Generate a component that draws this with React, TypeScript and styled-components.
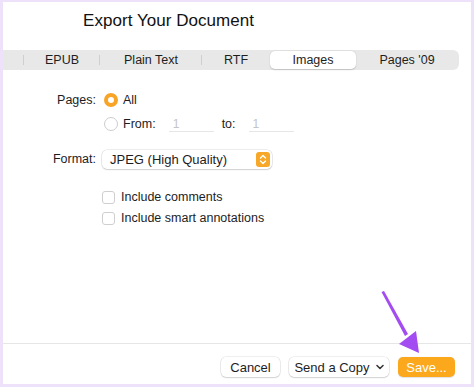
import React from "react";
import styled, { createGlobalStyle } from "styled-components";

const Global = createGlobalStyle`
  html, body { margin: 0; padding: 0; }
  body {
    background: #eee2fb;
    font-family: "Liberation Sans", Arial, sans-serif;
    color: #1d1d1f;
    -webkit-font-smoothing: antialiased;
  }
`;

const Frame = styled.div`
  width: 474px;
  height: 387px;
  box-sizing: border-box;
  padding: 2px 3px 3px 3px;
  overflow: hidden;
`;

const Panel = styled.div`
  position: relative;
  height: 100%;
  background: #ffffff;
  display: flex;
  flex-direction: column;
  overflow: hidden;
`;

const Title = styled.h1`
  margin: 0;
  padding: 9px 0 0 80px;
  height: 38px;
  box-sizing: border-box;
  font-size: 17px;
  font-weight: 400;
  color: #111;
  letter-spacing: 0.05px;
`;

const TabBar = styled.div`
  margin-top: 10px;
  width: 456px;
  height: 20px;
  display: flex;
  align-items: center;
  background: #e8e8e8;
  border-radius: 0 6px 6px 0;
`;

const Tab = styled.div<{ $active?: boolean; $w: number; $sep?: boolean }>`
  position: relative;
  width: ${(p) => p.$w}px;
  height: 18px;
  display: flex;
  align-items: center;
  justify-content: center;
  font-size: 12.5px;
  color: #1e1e1e;
  border-radius: 5px;
  background: ${(p) => (p.$active ? "#fff" : "transparent")};
  box-shadow: ${(p) => (p.$active ? "0 0.5px 1.5px rgba(0,0,0,0.18)" : "none")};
  &::after {
    content: "";
    display: ${(p) => (p.$sep ? "block" : "none")};
    position: absolute;
    right: 0;
    top: 4px;
    height: 10px;
    width: 1px;
    background: #cfcfcf;
  }
`;

const Form = styled.div`
  display: grid;
  grid-template-columns: 93px 1fr;
  column-gap: 6px;
  margin-top: 22px;
  font-size: 12.5px;
`;

const Label = styled.div<{ $top: number }>`
  text-align: right;
  margin-top: ${(p) => p.$top}px;
  line-height: 16px;
  color: #1d1d1f;
`;

const Stack = styled.div<{ $gap: number; $top?: number }>`
  display: flex;
  flex-direction: column;
  gap: ${(p) => p.$gap}px;
  margin-top: ${(p) => p.$top ?? 0}px;
`;

const Row = styled.div`
  display: flex;
  align-items: center;
  height: 16px;
  line-height: 16px;
`;

const Radio = styled.span<{ $on?: boolean }>`
  width: 14px;
  height: 14px;
  box-sizing: border-box;
  border-radius: 50%;
  margin: 0 5px 0 2px;
  flex: none;
  background: #fff;
  border: ${(p) => (p.$on ? "4px solid #f7a427" : "1px solid #cdcdcd")};
`;

const Field = styled.span`
  display: inline-block;
  width: 45px;
  height: 16px;
  margin: 0 8px 0 13px;
  padding-left: 4px;
  box-sizing: border-box;
  border-bottom: 1px solid #e6e6e6;
  color: #c4c4c4;
  font-size: 12px;
`;

const Select = styled.div`
  width: 170px;
  height: 19px;
  margin-top: -1px;
  box-sizing: border-box;
  display: flex;
  align-items: center;
  justify-content: space-between;
  padding: 0 2px 0 8px;
  border-radius: 5px;
  background: #fff;
  box-shadow: 0 0 0 0.5px rgba(0,0,0,0.14), 0 1px 1.5px rgba(0,0,0,0.12);
  font-size: 13px;
`;

const Stepper = styled.span`
  width: 14px;
  height: 15px;
  border-radius: 3px;
  background: #f8a829;
  display: flex;
  align-items: center;
  justify-content: center;
`;

const Check = styled.span`
  width: 13px;
  height: 13px;
  box-sizing: border-box;
  border-radius: 3px;
  border: 1px solid #cfcfcf;
  margin: 0 6px 0 0;
  flex: none;
`;

const Spacer = styled.div`
  flex: 1;
`;

const Footer = styled.div`
  border-top: 1px solid #e6e6e6;
  height: 41px;
  box-sizing: border-box;
  display: flex;
  justify-content: flex-end;
  align-items: flex-start;
  gap: 9px;
  padding: 13px 16px 0 0;
`;

const Button = styled.div<{ $primary?: boolean; $w: number }>`
  width: ${(p) => p.$w}px;
  height: 20px;
  box-sizing: border-box;
  display: flex;
  align-items: center;
  justify-content: center;
  gap: 6px;
  font-size: 13px;
  border-radius: 5px;
  color: ${(p) => (p.$primary ? "#fff" : "#1d1d1f")};
  background: ${(p) => (p.$primary ? "#fca81d" : "#fff")};
  box-shadow: ${(p) =>
    p.$primary
      ? "0 0.5px 1px rgba(0,0,0,0.12)"
      : "0 0 0 0.5px rgba(0,0,0,0.13), 0 1px 1.5px rgba(0,0,0,0.12)"};
`;

const Arrow = styled.svg`
  position: absolute;
  left: 0;
  top: 0;
  pointer-events: none;
`;

export default function App() {
  return (
    <>
      <Global />
      <Frame>
        <Panel>
          <Title>Export Your Document</Title>
          <TabBar>
            <Tab $w={21} $sep />
            <Tab $w={76} $sep>EPUB</Tab>
            <Tab $w={102} $sep>Plain Text</Tab>
            <Tab $w={68}>RTF</Tab>
            <Tab $w={86} $active>Images</Tab>
            <Tab $w={102}>Pages '09</Tab>
          </TabBar>
          <Form>
            <Label $top={0}>Pages:</Label>
            <Stack $gap={8}>
              <Row>
                <Radio $on />
                All
              </Row>
              <Row>
                <Radio />
                From:
                <Field>1</Field>
                to:
                <Field>1</Field>
              </Row>
            </Stack>
            <Label $top={19}>Format:</Label>
            <Stack $gap={0} $top={19}>
              <Select>
                JPEG (High Quality)
                <Stepper>
                  <svg width="8" height="11" viewBox="0 0 8 11">
                    <path d="M1.5 4 L4 1.5 L6.5 4 M1.5 7 L4 9.5 L6.5 7" fill="none" stroke="#fff" strokeWidth="1.4" strokeLinecap="round" strokeLinejoin="round" />
                  </svg>
                </Stepper>
              </Select>
            </Stack>
            <div />
            <Stack $gap={5} $top={20}>
              <Row>
                <Check />
                Include comments
              </Row>
              <Row>
                <Check />
                Include smart annotations
              </Row>
            </Stack>
          </Form>
          <Spacer />
          <Footer>
            <Button $w={59}>Cancel</Button>
            <Button $w={100}>
              Send a Copy
              <svg width="8" height="6" viewBox="0 0 8 6">
                <path d="M1 1.5 L4 4.5 L7 1.5" fill="none" stroke="#333" strokeWidth="1.5" strokeLinecap="round" strokeLinejoin="round" />
              </svg>
            </Button>
            <Button $w={57} $primary>Save...</Button>
          </Footer>
          <Arrow width="468" height="382" viewBox="3 2 468 382">
            <polygon points="381.5,292 384,291 408,334 405,336" fill="#a24cf2" />
            <polygon points="419,353 399,344 416,331" fill="#a24cf2" />
          </Arrow>
        </Panel>
      </Frame>
    </>
  );
}
